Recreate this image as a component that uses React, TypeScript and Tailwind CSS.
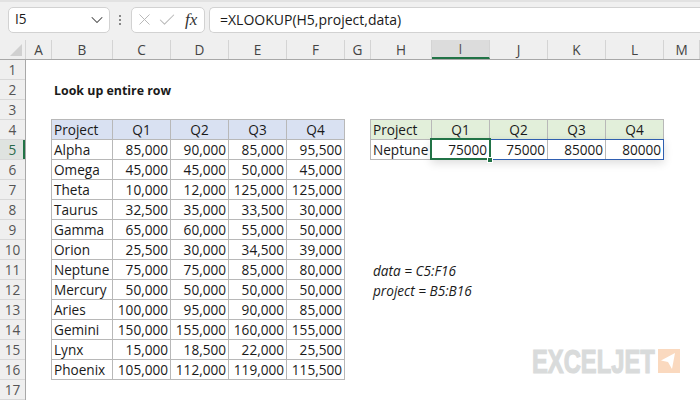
import { Check, ChevronDown, X } from 'lucide-react';

// column widths in px, row header first
const COLUMNS = [
  { name: '', cls: 'w-[26px]' },
  { name: 'A', cls: 'w-[26px]' },
  { name: 'B', cls: 'w-[61px]' },
  { name: 'C', cls: 'w-[58px]' },
  { name: 'D', cls: 'w-[58px]' },
  { name: 'E', cls: 'w-[58px]' },
  { name: 'F', cls: 'w-[58px]' },
  { name: 'G', cls: 'w-[26px]' },
  { name: 'H', cls: 'w-[61px]' },
  { name: 'I', cls: 'w-[58px]' },
  { name: 'J', cls: 'w-[58px]' },
  { name: 'K', cls: 'w-[58px]' },
  { name: 'L', cls: 'w-[58px]' },
  { name: 'M', cls: 'w-[36px]' },
];

const DATA: string[][] = [
  ['Alpha', '85,000', '90,000', '85,000', '95,500'],
  ['Omega', '45,000', '45,000', '50,000', '45,000'],
  ['Theta', '10,000', '12,000', '125,000', '125,000'],
  ['Taurus', '32,500', '35,000', '33,500', '30,000'],
  ['Gamma', '65,000', '60,000', '55,000', '50,000'],
  ['Orion', '25,500', '30,000', '34,500', '39,000'],
  ['Neptune', '75,000', '75,000', '85,000', '80,000'],
  ['Mercury', '50,000', '50,000', '50,000', '50,000'],
  ['Aries', '100,000', '95,000', '90,000', '85,000'],
  ['Gemini', '150,000', '155,000', '160,000', '155,000'],
  ['Lynx', '15,000', '18,500', '22,000', '25,500'],
  ['Phoenix', '105,000', '112,000', '119,000', '115,500'],
];

const QUARTERS = ['Q1', 'Q2', 'Q3', 'Q4'];
const ROWS = Array.from({ length: 17 }, (_, i) => i + 1);

function Cell({ text, bg, align }: { text: string; bg?: string; align: 'l' | 'c' | 'r' }) {
  const alignCls = align === 'l' ? 'justify-start pl-[2px]' : align === 'c' ? 'justify-center' : 'justify-end pr-[2px]';
  return (
    <div className={`flex h-[20px] items-center whitespace-nowrap border-r border-b border-[#b8b8b8] pt-[2px] ${alignCls} ${bg ?? ''}`}>
      {text}
    </div>
  );
}

function DataTable() {
  return (
    <div className="grid grid-cols-[61px_58px_58px_58px_58px] border-t border-l border-[#b8b8b8] -mt-px -ml-px">
      <Cell text="Project" align="l" bg="bg-[#d9e1f2]" />
      {QUARTERS.map((q) => (
        <Cell key={q} text={q} align="c" bg="bg-[#d9e1f2]" />
      ))}
      {DATA.map((row) =>
        row.map((v, i) => <Cell key={row[0] + i} text={v} align={i === 0 ? 'l' : 'r'} />),
      )}
    </div>
  );
}

function ResultTable() {
  return (
    <div className="relative grid grid-cols-[61px_58px_58px_58px_58px] border-t border-l border-[#b8b8b8] -mt-px -ml-px">
      <Cell text="Project" align="l" bg="bg-[#e2efda]" />
      {QUARTERS.map((q) => (
        <Cell key={q} text={q} align="c" bg="bg-[#e2efda]" />
      ))}
      <Cell text="Neptune" align="l" />
      {['75000', '75000', '85000', '80000'].map((v, i) => (
        <Cell key={i} text={v} align="r" />
      ))}
      {/* spill range outline */}
      <div className="absolute left-[60px] top-[19px] h-[21px] w-[233px] border border-[#2f5fb0] shadow-[0_3px_10px_rgba(0,0,0,0.14)]" />
      {/* active cell */}
      <div className="absolute left-[59px] top-[18px] h-[22px] w-[61px] border-2 border-[#217346]" />
      <div className="absolute left-[116px] top-[37px] h-[6px] w-[6px] border border-white bg-[#217346]" />
    </div>
  );
}

export default function App() {
  return (
    <div className="relative h-[400px] w-[700px] overflow-hidden bg-white font-['Open_Sans','Noto_Sans',sans-serif] text-[13.6px] text-[#1a1a1a]">
      {/* formula bar */}
      <div className="flex h-[40px] items-center border-t-[2px] border-[#e2e2e2] bg-[#f0f0f0] pl-[8px] pb-[3px]">
        <div className="flex h-[26px] w-[102px] items-center justify-between rounded-[5px] border border-[#d2d2d2] bg-white pl-[6px] pr-[2px]">
          <span>I5</span>
          <ChevronDown className="h-[20px] w-[20px] text-[#444]" strokeWidth={1.25} />
        </div>
        <div className="ml-[9px] flex w-[4px] flex-col gap-[2px]">
          <span className="h-[2px] w-[2px] bg-[#888]" />
          <span className="h-[2px] w-[2px] bg-[#888]" />
          <span className="h-[2px] w-[2px] bg-[#888]" />
        </div>
        <div className="ml-[8px] flex h-[26px] w-[74px] items-center rounded-[5px] border border-[#d2d2d2] bg-white pl-[3px]">
          <X className="h-[19px] w-[19px] text-[#b8b8b8]" strokeWidth={1.25} />
          <Check className="ml-[3px] h-[20px] w-[20px] text-[#b8b8b8]" strokeWidth={1.25} />
          <span className="ml-[8px] font-['Liberation_Serif',serif] text-[17px] italic leading-none text-[#333]">fx</span>
        </div>
        <div className="ml-[4px] flex h-[26px] flex-1 items-center rounded-l-[5px] border border-r-0 border-[#d2d2d2] bg-white pl-[10px] text-[14px]">
          =XLOOKUP(H5,project,data)
        </div>
      </div>

      {/* column headers */}
      <div className="flex h-[20px] border-b border-[#a8a8a8] bg-[#efefef] text-[#444]">
        {COLUMNS.map((c, i) => (
          <div
            key={i}
            className={`relative flex items-center justify-center border-r border-[#d4d4d4] pt-[2px] ${c.cls} ${
              c.name === 'I' ? 'border-b-2 border-b-[#217346] bg-[#dcdcdc] text-[#555]' : ''
            }`}
          >
            {i === 0 ? (
              <span className="absolute right-[3px] bottom-[3px] h-0 w-0 border-b-[12px] border-l-[12px] border-b-[#d0d0d0] border-l-transparent" />
            ) : (
              c.name
            )}
          </div>
        ))}
      </div>

      <div className="flex">
        {/* row headers */}
        <div className="w-[26px] shrink-0 border-r border-[#a8a8a8] bg-[#efefef] text-[#555]">
          {ROWS.map((r) => (
            <div
              key={r}
              className={`flex h-[20px] items-center justify-center border-b border-[#d8d8d8] pt-[2px] ${
                r === 5 ? 'bg-[#dfe3e0] text-[#2a6a4a] shadow-[inset_-2px_0_0_#217346]' : ''
              }`}
            >
              {r}
            </div>
          ))}
        </div>

        <div className="ml-[26px] flex items-start pt-[60px]">
          <DataTable />
          <div className="ml-[26px]">
            <ResultTable />
          </div>
        </div>
      </div>

      {/* sheet text */}
      <div className="absolute left-[54px] top-[80px] flex h-[20px] items-center pt-[2px] text-[12.4px] font-bold">Look up entire row</div>
      <div className="absolute left-[373px] top-[260px] pt-px italic leading-[20px]">
        <div>data = C5:F16</div>
        <div>project = B5:B16</div>
      </div>

      {/* watermark */}
      <div className="absolute left-[532px] top-[344px] flex items-start">
        <div className="w-[123px] overflow-visible">
          <span className="inline-block origin-left scale-x-[0.72] whitespace-nowrap font-['Liberation_Sans',sans-serif] text-[33px] leading-[36px] font-bold text-[#d9dbdb] [-webkit-text-stroke:1.2px_#d9dbdb]">
            EXCELJET
          </span>
        </div>
        <svg className="ml-[3px] mt-[5px]" width="22" height="24" viewBox="0 0 22 24">
          <rect width="22" height="24" fill="#fad9bf" />
          <path d="M3 11.5 L17 4 L14 20 L10 13 Z" fill="#fff" />
        </svg>
      </div>
    </div>
  );
}
